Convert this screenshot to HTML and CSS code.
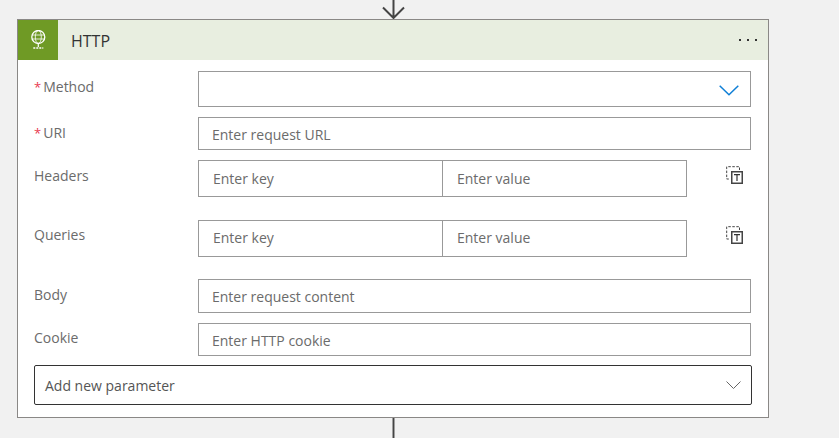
FILE: index.html
```html
<!DOCTYPE html>
<html lang="en">
<head>
  <meta charset="UTF-8">
  <meta name="viewport" content="width=device-width, initial-scale=1.0">
  <title>HTTP action</title>
  <link rel="stylesheet" href="styles.css">
</head>
<body>

<!-- Arrow coming in from the previous step -->
<div class="connector-top">
  <svg width="26" height="19" viewBox="0 0 26 19">
    <path d="M13.5 -4V17M3 7.5L13.5 18L24 7.5" fill="none" stroke="#444" stroke-width="2"/>
  </svg>
</div>

<div class="card">
  <div class="card-header">
    <div class="card-icon">
      <svg width="18" height="20" viewBox="0 0 18 20" fill="none" stroke="#fff">
        <circle cx="9.3" cy="7" r="6.5" stroke-width="1.3"/>
        <ellipse cx="9.3" cy="7" rx="3" ry="6.5" stroke-width="0.8"/>
        <path d="M2.8 5H15.8M2.8 9H15.8" stroke-width="0.8"/>
        <path d="M9.3 13.5V17" stroke-width="1.2"/>
        <path d="M4.3 18H14.3" stroke-width="1.6" stroke-dasharray="2 1"/>
      </svg>
    </div>
    <div class="card-title">HTTP</div>
    <div class="card-menu"><i></i><i></i><i></i></div>
  </div>

  <div class="card-body">
    <div class="row row-method">
      <div class="label"><span class="req">*</span>Method</div>
      <div class="field field-select">
        <svg width="20" height="11" viewBox="0 0 20 11">
          <path d="M0.7 0.7L10 9.7L19.3 0.7" fill="none" stroke="#0f7fd6" stroke-width="1.5"/>
        </svg>
      </div>
    </div>

    <div class="row row-single">
      <div class="label"><span class="req">*</span>URI</div>
      <div class="field">Enter request URL</div>
    </div>

    <div class="row row-pair">
      <div class="label">Headers</div>
      <div class="pair">
        <div class="field">Enter key</div>
        <div class="field">Enter value</div>
      </div>
      <svg class="text-mode" width="19" height="19" viewBox="0 0 19 19" fill="none">
        <path d="M14.5 4V0.7H1.7V13H5" stroke="#444" stroke-dasharray="2.5 1.5"/>
        <rect x="6.75" y="5.75" width="10.5" height="11.5" fill="#fff" stroke="#444" stroke-width="1.5"/>
        <path d="M9 8.6H15M12 8.6V15" stroke="#333" stroke-width="1.2"/>
      </svg>
    </div>

    <div class="row row-pair row-queries">
      <div class="label label-tight">Queries</div>
      <div class="pair">
        <div class="field">Enter key</div>
        <div class="field">Enter value</div>
      </div>
      <svg class="text-mode" width="19" height="19" viewBox="0 0 19 19" fill="none">
        <path d="M14.5 4V0.7H1.7V13H5" stroke="#444" stroke-dasharray="2.5 1.5"/>
        <rect x="6.75" y="5.75" width="10.5" height="11.5" fill="#fff" stroke="#444" stroke-width="1.5"/>
        <path d="M9 8.6H15M12 8.6V15" stroke="#333" stroke-width="1.2"/>
      </svg>
    </div>

    <div class="row row-single row-body">
      <div class="label">Body</div>
      <div class="field">Enter request content</div>
    </div>

    <div class="row row-single">
      <div class="label label-tight">Cookie</div>
      <div class="field">Enter HTTP cookie</div>
    </div>

    <div class="add-param">
      <span>Add new parameter</span>
      <svg width="15" height="9" viewBox="0 0 15 9">
        <path d="M0.5 0.5L7.5 7.5L14.5 0.5" fill="none" stroke="#666" stroke-width="1"/>
      </svg>
    </div>
  </div>
</div>

<!-- Line going on to the next step -->
<div class="connector-bottom"></div>

</body>
</html>
```

FILE: styles.css
```css
/* General Styles */
body {
  margin: 0;
  padding-left: 17px;
  width: 752px;
  background-color: #f1f1f1;
  font-family: 'Open Sans', sans-serif;
  font-size: 14px;
  color: #6b6b6b;
}

.connector-top {
  height: 19px;
  display: flex;
  justify-content: center;
}

.connector-bottom {
  width: 1px;
  height: 20px;
  margin-left: 375px;
  background-color: #444;
  border-left: 1px solid #a0a0a0;
  border-right: 1px solid #a0a0a0;
}

/* Card */
.card {
  height: 399px;
  box-sizing: border-box;
  border: 1px solid #8a8886;
  background: #fff;
}

.card-header {
  height: 40px;
  display: flex;
  align-items: center;
  background-color: #e8eee0;
}

.card-icon {
  width: 40px;
  height: 40px;
  display: flex;
  align-items: center;
  justify-content: center;
  background-color: #6f9a25;
}

.card-title {
  margin-left: 13px;
  padding-top: 2px;
  font-size: 16px;
  color: #333;
}

.card-menu {
  margin-left: auto;
  margin-right: 11px;
  display: flex;
  gap: 6px;
}

.card-menu i {
  width: 2px;
  height: 2px;
  background-color: #333;
}

/* Form rows */
.card-body {
  padding: 11px 17px 0 16px;
}

.row {
  display: flex;
  margin-bottom: 10px;
}

.row-method { height: 36px; }
.row-single { height: 33px; }
.row-pair { height: 37px; }
.row-queries { margin-top: 23px; margin-bottom: 22px; }
.row-body { height: 34px; }

.label {
  width: 164px;
  flex-shrink: 0;
  line-height: 32px;
}

.label-tight {
  line-height: 30px;
}

.req {
  margin-right: 2px;
  font-size: 13px;
  color: #e8384f;
}

.field {
  flex: 1;
  display: flex;
  align-items: center;
  justify-content: space-between;
  box-sizing: border-box;
  padding: 1px 13px 0;
  border: 1px solid #999;
  background: #fff;
}

.field-select {
  justify-content: flex-end;
  padding: 3px 11px 0 0;
}

.pair {
  width: 489px;
  display: flex;
}

.pair .field {
  flex: 1;
  padding: 0 14px 1px;
}

.pair .field + .field {
  margin-left: -1px;
}

.row-queries .pair .field {
  padding-bottom: 3px;
}

.text-mode {
  margin: 6px 0 0 38px;
}

.add-param {
  width: 718px;
  height: 40px;
  margin-top: -1px;
  box-sizing: border-box;
  display: flex;
  align-items: center;
  justify-content: space-between;
  padding: 0 10px;
  border: 1px solid #333;
  border-radius: 2px;
  color: #555;
}
```
